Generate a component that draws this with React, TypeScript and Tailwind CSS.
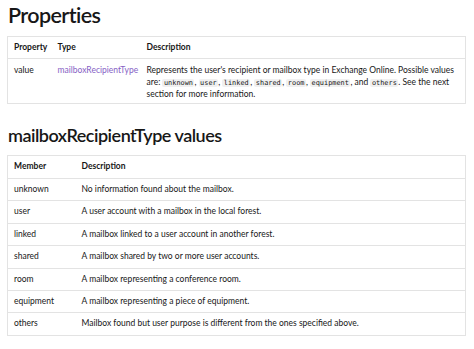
import React from "react";

const members = [
    { name: "unknown", desc: "No information found about the mailbox." },
    { name: "user", desc: "A user account with a mailbox in the local forest." },
    { name: "linked", desc: "A mailbox linked to a user account in another forest." },
    { name: "shared", desc: "A mailbox shared by two or more user accounts." },
    { name: "room", desc: "A mailbox representing a conference room." },
    { name: "equipment", desc: "A mailbox representing a piece of equipment." },
    { name: "others", desc: "Mailbox found but user purpose is different from the ones specified above." },
];

const Code = ({ children }: { children: React.ReactNode }) => (
    <code className="font-['DejaVu_Sans_Mono',monospace] text-[6.9px] bg-[#f0f0f0] px-[1.5px] rounded-[2px] text-[#171717]">{children}</code>
);

export default function App() {
    return (
        <div className="w-[474px] h-[349px] bg-white overflow-hidden font-['Lato',sans-serif] text-[#171717] px-[7px]">
            <h1 className="h-[29px] text-[21.5px] leading-[29px] font-semibold pt-[1px] pl-[1px] tracking-[-0.6px]">Properties</h1>
            <table className="mt-[7px] w-[459px] border border-[#e3e3e3] border-collapse text-[8.5px] leading-[11.5px] table-fixed">
                <thead>
                    <tr className="h-[22px]">
                        <th className="w-[44px] text-left font-bold pl-[6px] p-0">Property</th>
                        <th className="w-[89px] text-left font-bold pl-[6px] p-0">Type</th>
                        <th className="text-left font-bold pl-[6px] p-0">Description</th>
                    </tr>
                </thead>
                <tbody>
                    <tr className="border-t border-[#e3e3e3] h-[45px]">
                        <td className="align-top pl-[6px] pt-[6px]">value</td>
                        <td className="align-top pl-[6px] pt-[6px] text-[#8661c5]">mailboxRecipientType</td>
                        <td className="align-top pl-[6px] pr-[6px] pt-[6px]">
                            Represents the user's recipient or mailbox type in Exchange Online. Possible values are: <Code>unknown</Code>, <Code>user</Code>, <Code>linked</Code>, <Code>shared</Code>, <Code>room</Code>, <Code>equipment</Code>, and <Code>others</Code>. See the next section for more information.
                        </td>
                    </tr>
                </tbody>
            </table>
            <h2 className="mt-[19px] h-[24px] text-[18px] leading-[24px] font-semibold pl-[1px] tracking-[-0.5px]">mailboxRecipientType values</h2>
            <table className="mt-[8px] w-[459px] border border-[#e3e3e3] border-collapse text-[8.5px] leading-[11.5px] table-fixed">
                <thead>
                    <tr className="h-[23px]">
                        <th className="w-[68px] text-left font-bold pl-[6px]">Member</th>
                        <th className="text-left font-bold pl-[6px]">Description</th>
                    </tr>
                </thead>
                <tbody>
                    {members.map((m) => (
                        <tr key={m.name} className="h-[22.4px] border-t border-[#e3e3e3]">
                            <td className="pl-[6px]">{m.name}</td>
                            <td className="pl-[6px]">{m.desc}</td>
                        </tr>
                    ))}
                </tbody>
            </table>
        </div>
    );
}
